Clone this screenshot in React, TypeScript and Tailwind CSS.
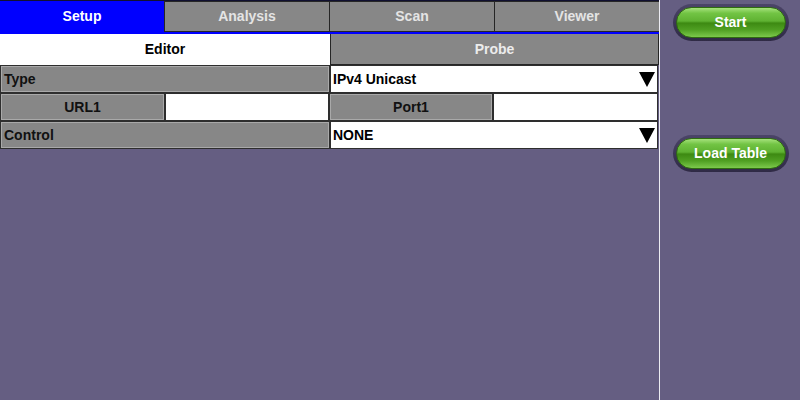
import type { ReactNode } from "react";

const font = { fontFamily: '"Liberation Sans", Arial, sans-serif' };

function Tab({ label, active }: { label: string; active?: boolean }) {
  if (active) {
    return (
      <div className="flex-1 flex items-center justify-center text-white font-bold text-[14px]">
        {label}
      </div>
    );
  }
  return (
    <div className="flex-1 flex items-center justify-center bg-[#878787] border-l border-b border-t border-[#262626] text-[#e4e4e4] font-bold text-[14px]">
      {label}
    </div>
  );
}

function Label({ children, center, className = "" }: { children: ReactNode; center?: boolean; className?: string }) {
  return (
    <div className={`border border-[#2e2e2e] ${className}`}>
      <div
        className={`h-full border border-[#a9a9a9] bg-[#878787] flex items-center text-[14px] font-bold text-[#111] ${
          center ? "justify-center" : "pl-[2px]"
        }`}
      >
        {children}
      </div>
    </div>
  );
}

function Field({ value, dropdown, className = "" }: { value?: string; dropdown?: boolean; className?: string }) {
  return (
    <div className={`border border-[#2e2e2e] bg-white flex items-center pl-[2px] pr-[2px] text-[14px] font-bold text-black ${className}`}>
      <span className="flex-1">{value}</span>
      {dropdown && (
        <svg width="16" height="15" viewBox="0 0 16 15">
          <polygon points="0,0 16,0 8,15" fill="#000" />
        </svg>
      )}
    </div>
  );
}

function GreenButton({ label }: { label: string }) {
  return (
    <div className="w-[116px] h-[37px] rounded-full bg-gradient-to-b from-[#4b4468] to-[#2f2a45] p-[3px]">
      <div className="h-full rounded-full border border-[#2f6c10] bg-[linear-gradient(to_bottom,#a6e27c_0%,#72c444_18%,#5fb232_45%,#3d8a12_52%,#4f9f22_75%,#7cc94c_100%)] flex items-center justify-center text-white font-bold text-[14px]">
        {label}
      </div>
    </div>
  );
}

export default function App() {
  return (
    <div style={font} className="w-[800px] h-[400px] bg-[#655e82] flex overflow-hidden">
      <div className="w-[659px] flex flex-col">
        <div className="h-[32px] bg-[#0000ff] border-t border-[#101030] flex">
          <Tab label="Setup" active />
          <Tab label="Analysis" />
          <Tab label="Scan" />
          <Tab label="Viewer" />
        </div>
        <div className="h-[2px] bg-[#0000ff]" />
        <div className="h-[31px] flex">
          <div className="w-[330px] bg-white flex items-center justify-center text-[14px] font-bold text-black">
            Editor
          </div>
          <div className="flex-1 bg-[#878787] border-l border-b border-r border-[#262626] flex items-center justify-center text-[14px] font-bold text-[#ececec]">
            Probe
          </div>
        </div>
        <div className="flex h-[28px]">
          <Label className="w-[330px]">Type</Label>
          <Field className="w-[328px]" value="IPv4 Unicast" dropdown />
        </div>
        <div className="flex h-[28px]">
          <Label className="w-[165px]" center>URL1</Label>
          <Field className="w-[164px]" />
          <Label className="w-[164px]" center>Port1</Label>
          <Field className="w-[165px]" />
        </div>
        <div className="flex h-[28px]">
          <Label className="w-[330px]">Control</Label>
          <Field className="w-[328px]" value="NONE" dropdown />
        </div>
      </div>
      <div className="w-px bg-[#ececf2]" />
      <div className="flex-1 flex flex-col items-center pt-[4px] pl-[1px] gap-[94px]">
        <GreenButton label="Start" />
        <GreenButton label="Load Table" />
      </div>
    </div>
  );
}
